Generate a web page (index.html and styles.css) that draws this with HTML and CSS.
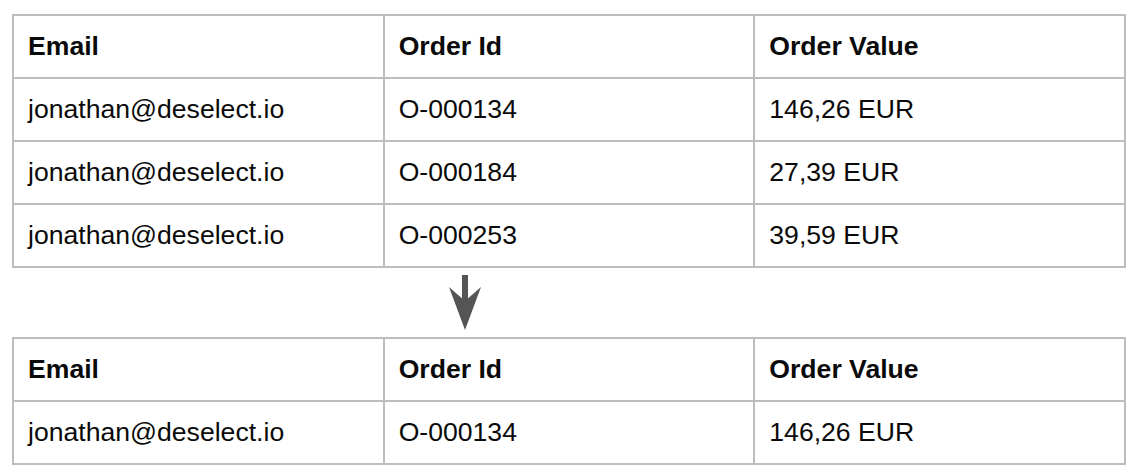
FILE: index.html
```html
<!DOCTYPE html>
<html>
<head>
<meta charset="utf-8">
<link rel="stylesheet" href="styles.css">
</head>
<body>
<div class="page">
  <table class="data">
    <tr class="head"><th>Email</th><th>Order Id</th><th>Order Value</th></tr>
    <tr><td>jonathan@deselect.io</td><td>O-000134</td><td>146,26 EUR</td></tr>
    <tr><td>jonathan@deselect.io</td><td>O-000184</td><td>27,39 EUR</td></tr>
    <tr><td>jonathan@deselect.io</td><td>O-000253</td><td>39,59 EUR</td></tr>
  </table>
  <div class="arrow-row">
    <svg class="arrow" width="34" height="58" viewBox="0 0 34 58">
      <rect x="14" y="1" width="6" height="28" fill="#555"/>
      <path d="M1 13 L17 56 L33 13 L17 27 Z" fill="#555"/>
    </svg>
  </div>
  <table class="data">
    <tr class="head"><th>Email</th><th>Order Id</th><th>Order Value</th></tr>
    <tr><td>jonathan@deselect.io</td><td>O-000134</td><td>146,26 EUR</td></tr>
  </table>
</div>
</body>
</html>
```
FILE: styles.css
```css
html, body {
  margin: 0;
  background: #fff;
}
.page {
  padding: 14px 0 0 12px;
  font-family: "Liberation Sans", Arial, sans-serif;
  color: #0a0a0a;
}
.data {
  border-collapse: collapse;
  width: 1114px;
  table-layout: fixed;
  font-size: 26.6px;
}
.data th,
.data td {
  border: 2px solid #bdbdbd;
  height: 63px;
  padding: 0 14px;
  text-align: left;
  vertical-align: middle;
  box-sizing: border-box;
}
.data th {
  font-weight: bold;
}
.arrow-row {
  height: 69px;
  padding-left: 436px;
  display: flex;
  align-items: flex-start;
}
.arrow {
  display: block;
  margin-top: 6px;
}
```
